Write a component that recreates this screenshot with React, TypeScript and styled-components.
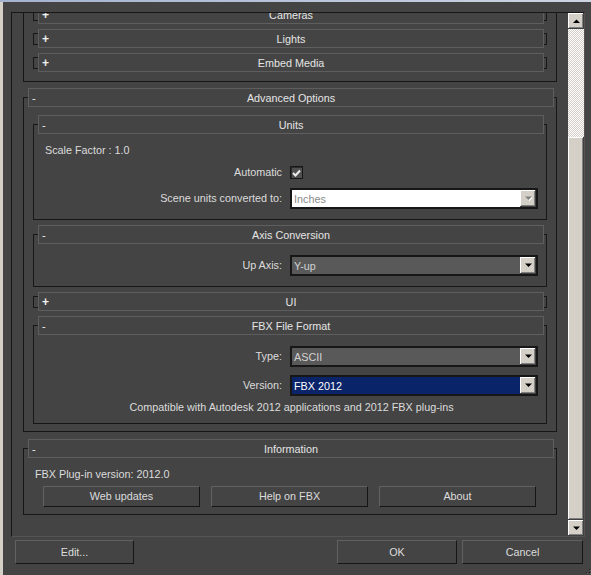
import React from "react";
import styled, { createGlobalStyle } from "styled-components";

const Global = createGlobalStyle`
  html, body { margin: 0; padding: 0; background: #444444; }
  body {
    font-family: "Liberation Sans", Arial, sans-serif;
    font-size: 10.8px;
    color: #dcdcdc;
  }
  * { box-sizing: border-box; }
`;

const FRAME = "#171717";

const Window = styled.div`
  position: relative;
  width: 591px;
  height: 575px;
  overflow: hidden;
  background: #444444;
  display: flex;
  flex-direction: column;
`;

const TitleEdge = styled.div`
  flex: none;
  height: 2px;
  background: linear-gradient(90deg, #a3b3d0, #cdd5e3);
`;

const Body = styled.div`
  flex: 1;
  display: flex;
  flex-direction: column;
  border-left: 3px solid #d4d0c8;
  padding-left: 8px;
`;

const Panel = styled.div`
  margin-top: 10px;
  width: 574px;
  height: 525px;
  display: flex;
  border-top: 1px solid ${FRAME};
  border-left: 1px solid ${FRAME};
  border-bottom: 1px solid #545454;
  border-right: 1px solid #545454;
`;

const Viewport = styled.div`
  flex: 1;
  overflow: hidden;
`;

const ScrollContent = styled.div`
  margin-top: -8px;
  padding: 0 11px;
  display: flex;
  flex-direction: column;
  gap: 6px;
`;

const GroupTail = styled.div`
  border: 1px solid ${FRAME};
  border-top: none;
  padding-bottom: 9px;
  display: flex;
  flex-direction: column;
  gap: 5px;
`;

const CollapsedFrame = styled.div`
  margin: 4px 9px 3px;
  height: 12px;
  border: 1px solid ${FRAME};
`;

const ExpandedFrame = styled.div<{ $gap?: number }>`
  margin-top: ${(p) => 9 + (p.$gap ?? 0)}px;
  border: 1px solid ${FRAME};
`;

const NestedExpanded = styled(ExpandedFrame)`
  margin-left: 9px;
  margin-right: 9px;
`;

const HeaderBar = styled.div<{ $collapsed?: boolean }>`
  height: 19px;
  margin: ${(p) => (p.$collapsed ? "-5px 2px 0 4px" : "-10px 2px 0 4px")};
  padding-top: 1px;
  border: 1px solid #5e5e5e;
  background: #444444;
  display: grid;
  grid-template-columns: 14px 1fr 14px;
  align-items: center;
  color: #e4e4e4;
  line-height: 16px;
`;

const Sign = styled.span<{ $plus?: boolean }>`
  padding-left: 3px;
  font-weight: ${(p) => (p.$plus ? 700 : 400)};
  font-size: ${(p) => (p.$plus ? "12px" : "11px")};
  color: #f0f0f0;
`;

const HeaderTitle = styled.span`
  text-align: center;
  white-space: nowrap;
`;

const ExpandedBody = styled.div<{ $pt: number; $pb: number; $pl?: number; $pr?: number; $gap?: number }>`
  padding: ${(p) => `${p.$pt}px ${p.$pr ?? 8}px ${p.$pb}px ${p.$pl ?? 11}px`};
  display: flex;
  flex-direction: column;
  gap: ${(p) => p.$gap ?? 8}px;
`;

const PlainText = styled.div<{ $center?: boolean; $mt?: number }>`
  height: 16px;
  line-height: 16px;
  white-space: nowrap;
  text-align: ${(p) => (p.$center ? "center" : "left")};
  margin-top: ${(p) => p.$mt ?? 0}px;
`;

const FieldRow = styled.div<{ $mt?: number }>`
  display: grid;
  grid-template-columns: 1fr 248px;
  column-gap: 8px;
  align-items: center;
  margin-top: ${(p) => p.$mt ?? 0}px;
`;

const FieldLabel = styled.span`
  text-align: right;
  white-space: nowrap;
  line-height: 13px;
`;

const Check = styled.span`
  width: 13px;
  height: 13px;
  border: 1px solid ${FRAME};
  background: #505050;
  box-shadow: inset 1px 1px #2c2c2c;
  display: flex;
  align-items: center;
  justify-content: center;
`;

type ComboKind = "disabled" | "dark" | "selected";

const Combo = styled.div`
  height: 21px;
  border: 2px solid ${FRAME};
  display: flex;
`;

const ComboField = styled.div<{ $kind: ComboKind }>`
  flex: 1;
  padding: 1px 0 0 2px;
  line-height: 16px;
  white-space: nowrap;
  background: ${(p) =>
    p.$kind === "disabled" ? "#ffffff" : p.$kind === "selected" ? "#0a246a" : "#595959"};
  color: ${(p) =>
    p.$kind === "disabled" ? "#8a8a8a" : p.$kind === "selected" ? "#ffffff" : "#d2d2d2"};
`;

const ClassicButton = styled.div`
  width: 16px;
  flex: none;
  background: #d4d0c8;
  box-shadow: inset -1px -1px #404040, inset 1px 1px #ffffff, inset -2px -2px #808080,
    inset 2px 2px #d4d0c8;
  display: flex;
  align-items: center;
  justify-content: center;
`;

const DarkButton = styled.div<{ $h: number; $w?: number; $lift?: number }>`
  height: ${(p) => p.$h}px;
  ${(p) => (p.$w ? `width: ${p.$w}px;` : "")}
  padding-bottom: ${(p) => p.$lift ?? 0}px;
  background: #444444;
  border-top: 1px solid #616161;
  border-left: 1px solid #616161;
  border-right: 1px solid #161616;
  border-bottom: 1px solid #161616;
  display: flex;
  align-items: center;
  justify-content: center;
  color: #dcdcdc;
  white-space: nowrap;
`;

const InfoButtons = styled.div`
  margin-left: 8px;
  display: grid;
  grid-template-columns: repeat(3, 157px);
  column-gap: 11px;
`;

const ScrollBar = styled.div`
  width: 16px;
  flex: none;
  display: flex;
  flex-direction: column;
`;

const ScrollArrow = styled(ClassicButton)`
  height: 16px;
`;

const Track = styled.div`
  height: 108px;
  flex: none;
  background: repeating-conic-gradient(#ffffff 0 25%, #d4d0c8 0 50%) 0 0 / 2px 2px;
`;

const Thumb = styled(ClassicButton)`
  flex: 1;
`;

const BottomRow = styled.div`
  margin-top: 3px;
  padding: 0 8px 0 4px;
  display: flex;
  gap: 5px;
`;

const Spacer = styled.div`
  flex: 1;
`;

const Grip = styled.svg`
  position: absolute;
  right: 0;
  bottom: 0;
`;

const Arrow = ({ up, disabled }: { up?: boolean; disabled?: boolean }) => (
  <svg width="7" height="5" viewBox="0 0 7 5">
    {disabled && <polygon points={up ? "1,5 4,2 7,5" : "1,1 8,1 4.5,5"} fill="#ffffff" />}
    <polygon
      points={up ? "0,4 3.5,0.5 7,4" : "0,0.5 7,0.5 3.5,4"}
      fill={disabled ? "#808080" : "#000000"}
    />
  </svg>
);

const Collapsed = ({ title }: { title: string }) => (
  <CollapsedFrame>
    <HeaderBar $collapsed>
      <Sign $plus>+</Sign>
      <HeaderTitle>{title}</HeaderTitle>
      <span />
    </HeaderBar>
  </CollapsedFrame>
);

const Header = ({ title }: { title: string }) => (
  <HeaderBar>
    <Sign>-</Sign>
    <HeaderTitle>{title}</HeaderTitle>
    <span />
  </HeaderBar>
);

const ComboBox = ({ value, kind }: { value: string; kind: ComboKind }) => (
  <Combo>
    <ComboField $kind={kind}>{value}</ComboField>
    <ClassicButton>
      <Arrow disabled={kind === "disabled"} />
    </ClassicButton>
  </Combo>
);

export default function App() {
  return (
    <>
      <Global />
      <Window>
        <TitleEdge />
        <Body>
          <Panel>
            <Viewport>
              <ScrollContent>
                <GroupTail>
                  <Collapsed title="Cameras" />
                  <Collapsed title="Lights" />
                  <Collapsed title="Embed Media" />
                </GroupTail>

                <ExpandedFrame>
                  <Header title="Advanced Options" />
                  <ExpandedBody $pt={8} $pb={7} $pl={0} $pr={0} $gap={5}>
                    <NestedExpanded>
                      <Header title="Units" />
                      <ExpandedBody $pt={8} $pb={10} $gap={0}>
                        <PlainText>Scale Factor : 1.0</PlainText>
                        <FieldRow $mt={8}>
                          <FieldLabel>Automatic</FieldLabel>
                          <Check>
                            <svg width="9" height="8" viewBox="0 0 9 8">
                              <polyline
                                points="1,4 3.5,6.5 8,1.5"
                                fill="none"
                                stroke="#ececec"
                                strokeWidth="2"
                              />
                            </svg>
                          </Check>
                        </FieldRow>
                        <FieldRow $mt={9}>
                          <FieldLabel>Scene units converted to:</FieldLabel>
                          <ComboBox value="Inches" kind="disabled" />
                        </FieldRow>
                      </ExpandedBody>
                    </NestedExpanded>

                    <NestedExpanded>
                      <Header title="Axis Conversion" />
                      <ExpandedBody $pt={11} $pb={10}>
                        <FieldRow>
                          <FieldLabel>Up Axis:</FieldLabel>
                          <ComboBox value="Y-up" kind="dark" />
                        </FieldRow>
                      </ExpandedBody>
                    </NestedExpanded>

                    <Collapsed title="UI" />

                    <NestedExpanded>
                      <Header title="FBX File Format" />
                      <ExpandedBody $pt={11} $pb={8}>
                        <FieldRow>
                          <FieldLabel>Type:</FieldLabel>
                          <ComboBox value="ASCII" kind="dark" />
                        </FieldRow>
                        <FieldRow>
                          <FieldLabel>Version:</FieldLabel>
                          <ComboBox value="FBX 2012" kind="selected" />
                        </FieldRow>
                        <PlainText $center $mt={-5}>
                          Compatible with Autodesk 2012 applications and 2012 FBX plug-ins
                        </PlainText>
                      </ExpandedBody>
                    </NestedExpanded>
                  </ExpandedBody>
                </ExpandedFrame>

                <ExpandedFrame $gap={1}>
                  <Header title="Information" />
                  <ExpandedBody $pt={8} $pb={7} $gap={4}>
                    <PlainText>FBX Plug-in version: 2012.0</PlainText>
                    <InfoButtons>
                      <DarkButton $h={21} $lift={2}>Web updates</DarkButton>
                      <DarkButton $h={21} $lift={2}>Help on FBX</DarkButton>
                      <DarkButton $h={21} $lift={2}>About</DarkButton>
                    </InfoButtons>
                  </ExpandedBody>
                </ExpandedFrame>
              </ScrollContent>
            </Viewport>
            <ScrollBar>
              <ScrollArrow>
                <Arrow up />
              </ScrollArrow>
              <Track />
              <Thumb />
              <ScrollArrow>
                <Arrow />
              </ScrollArrow>
            </ScrollBar>
          </Panel>
          <BottomRow>
            <DarkButton $h={24} $w={119}>Edit...</DarkButton>
            <Spacer />
            <DarkButton $h={24} $w={120}>OK</DarkButton>
            <DarkButton $h={24} $w={121}>Cancel</DarkButton>
          </BottomRow>
        </Body>
        <Grip width="8" height="8" viewBox="0 0 8 8">
          <rect x="6" y="2" width="1" height="1" fill="#1e1e1e" />
          <rect x="6" y="5" width="1" height="1" fill="#1e1e1e" />
          <rect x="3" y="5" width="1" height="1" fill="#1e1e1e" />
          <rect x="7" y="3" width="1" height="1" fill="#6a6a6a" />
          <rect x="7" y="6" width="1" height="1" fill="#6a6a6a" />
          <rect x="4" y="6" width="1" height="1" fill="#6a6a6a" />
        </Grip>
      </Window>
    </>
  );
}
